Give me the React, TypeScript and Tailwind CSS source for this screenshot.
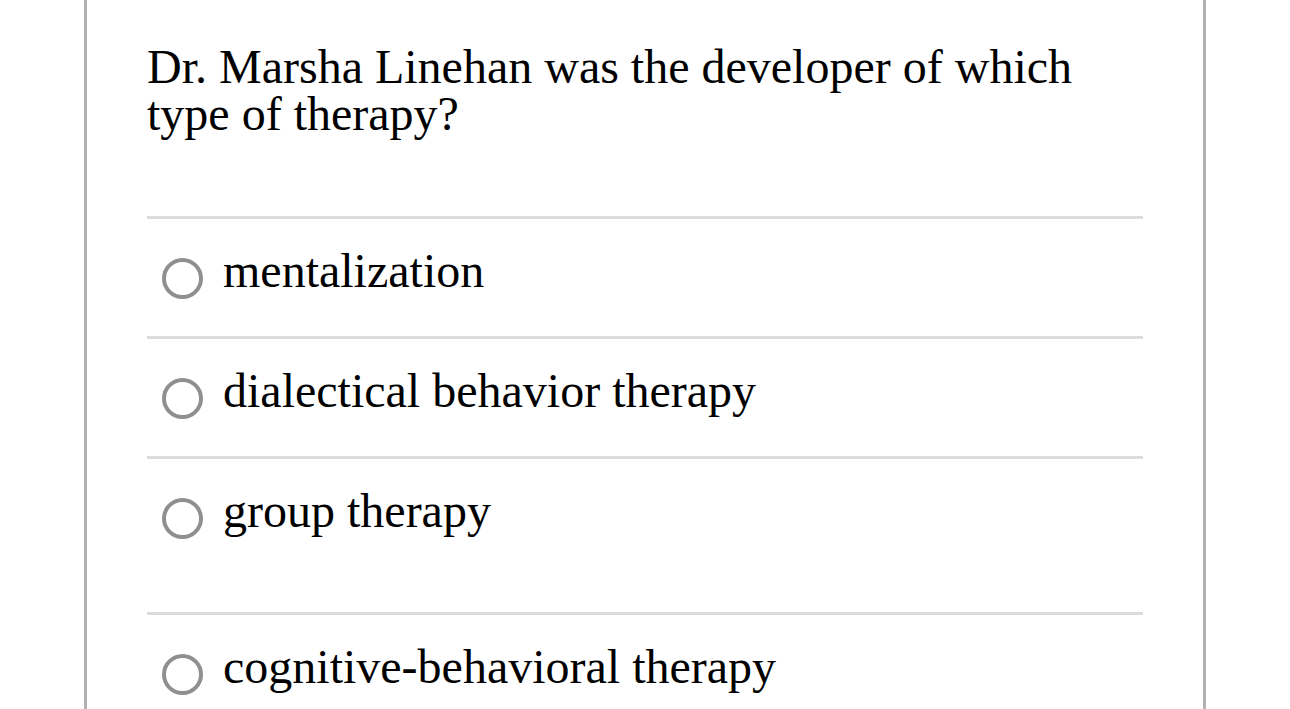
import React from "react";

const options = [
  { label: "mentalization", h: "h-[117px]" },
  { label: "dialectical behavior therapy", h: "h-[117px]" },
  { label: "group therapy", h: "h-[153px]" },
  { label: "cognitive-behavioral therapy", h: "h-[117px]" },
];

export default function App() {
  return (
    <div className="w-[1290px] h-[709px] overflow-hidden bg-white" style={{ fontFamily: '"Liberation Serif", "Times New Roman", serif' }}>
      <div className="ml-[84px] w-[1122px] h-[709px] border-x-[3px] border-[#b0b0b0] pl-[60px] pr-[60px]">
        <div className="pt-[43px] pb-[79px] text-[48px] leading-[47px] text-black">
          Dr. Marsha Linehan was the developer of which type of therapy?
        </div>
        {options.map((o) => (
          <div key={o.label}>
            <div className="h-[3px] bg-[#dcdcdc]" />
            <div className={`${o.h} pt-[27px] flex items-start gap-[20px] pl-[15px]`}>
              <div className="mt-[12px] w-[41px] h-[41px] shrink-0 rounded-full border-[4px] border-[#8f8f8f]" />
              <div className="text-[48px] leading-[50px] text-black">{o.label}</div>
            </div>
          </div>
        ))}
      </div>
    </div>
  );
}
